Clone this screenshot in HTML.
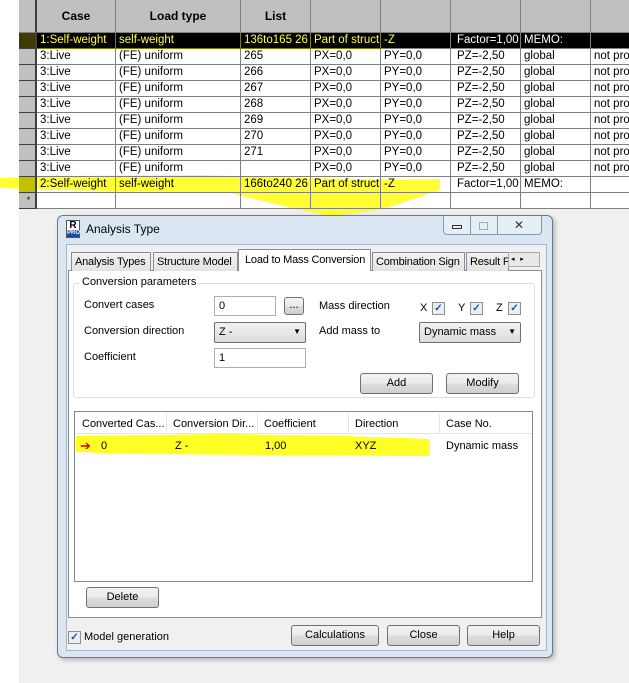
<!DOCTYPE html>
<html><head><style>
*{margin:0;padding:0;box-sizing:border-box}
body{width:629px;height:683px;overflow:hidden;background:#fff;font-family:"Liberation Sans",sans-serif;font-size:11px;position:relative}
.a{position:absolute}
.gbg{left:19px;top:209px;width:610px;height:474px;background:#f0f0f0}
.c{position:absolute;border-right:1px solid #808080;border-bottom:1px solid #808080;height:16px;line-height:15px;padding-left:3px;white-space:nowrap;overflow:hidden;color:#000;font-size:11.5px}
.h{background:#c0c0c0;font-weight:bold;text-align:center;padding:0;height:33px;line-height:32px;font-size:12px}
.rh{background:#c0c0c0;border-right:2px solid #404040;border-bottom:1px solid #404040}
.btn{position:absolute;border:1px solid #707070;border-radius:3px;background:linear-gradient(#f2f2f2,#ebebeb 50%,#dddddd 51%,#cfcfcf);text-align:center;font-size:11px;color:#000}
.tab{position:absolute;top:252px;height:19px;border:1px solid #898c95;border-bottom:none;background:linear-gradient(#f2f2f2,#e3e3e3);font-size:11px;line-height:18px;padding:0 3px;white-space:nowrap;overflow:hidden;letter-spacing:-0.2px}
.inp{position:absolute;background:#fff;border:1px solid #abadb3;font-size:11px;padding-left:4px;line-height:18px}
.lbl{position:absolute;font-size:11px;white-space:nowrap}
.cb{position:absolute;width:13px;height:13px;border:1px solid #8f8f8f;background:#e9eef5;color:#2a4f8f;font-size:10px;line-height:11px;text-align:center;font-weight:bold}
</style></head><body>
<div class="a gbg"></div>
<svg class="a" style="left:0;top:160px" width="629" height="60">
<path d="M0 18 L40 16 L200 15 L300 18 L400 20 L440 19 L440 30 L380 50 L330 56 L300 50 L230 33 L60 30 L0 28 Z" fill="#ffff00" opacity="0.8"/>
</svg>
<div id="g"></div>
<script>
var xs=[19,37,116,241,311,381,451,521,591,640];
var g=document.getElementById('g'),h='';
var hd=['','Case','Load type','List','','','','',''];
for(var i=0;i<9;i++){h+='<div class="c h" style="left:'+xs[i]+'px;top:0;width:'+(xs[i+1]-xs[i])+'px;'+(i==0?'border-right:2px solid #404040;':'')+'">'+hd[i]+'</div>';}
var rows=[];
rows.push(['1:Self-weight','self-weight','136to165 26','Part of struct','-Z','Factor=1,00','MEMO:','']);
for(var n=265;n<=272;n++)rows.push(['3:Live','(FE) uniform',n<272?''+n:'','PX=0,0','PY=0,0','PZ=-2,50','global','not proj']);
rows.push(['2:Self-weight','self-weight','166to240 26','Part of struct','-Z','Factor=1,00','MEMO:','']);
rows.push(['','','','','','','','']);
for(var r=0;r<rows.length;r++){var y=33+r*16;
 var blk=r==0;
 h+='<div class="c rh" style="left:19px;top:'+y+'px;width:18px;'+(blk?'background:#403c00;':'')+(r==9?'background:#c4c000;':'')+'text-align:center;font-size:9px">'+(r==10?'*':'')+'</div>';
 for(var i=1;i<9;i++){var st='left:'+xs[i]+'px;top:'+y+'px;width:'+(xs[i+1]-xs[i])+'px;';
  if(blk)st+='background:#000;color:#ffff40;'+(i<5?'border-color:#808000;':'');
  if(blk&&i>=6)st+='color:#fff;';
  if(i==6)st+='padding-left:6px;';
  h+='<div class="c" style="'+st+'">'+rows[r][i-1]+'</div>';}
}
g.innerHTML=h;
</script>
<!-- dialog -->
<div class="a" style="left:57px;top:215px;width:496px;height:443px;background:#dae7f3;border:1px solid #6a7a8c;border-radius:6px;box-shadow:2px 2px 5px rgba(0,0,0,.25)"></div>
<div class="a" style="left:66px;top:220px;width:14px;height:18px;background:#fff;border:1px solid #555;font-size:10px;font-weight:bold;text-align:center;line-height:9px">R<div style="background:#1d4aa0;color:#fff;font-size:6px;line-height:7px">PRO</div></div>
<div class="lbl" style="left:86px;top:222px;font-size:12px">Analysis Type</div>
<div class="a" style="left:443px;top:216px;width:99px;height:19px;border:1px solid #8a99aa;border-top:none;border-radius:0 0 4px 4px;background:#e6eef6"></div>
<div class="a" style="left:470px;top:216px;width:1px;height:18px;background:#8a99aa"></div>
<div class="a" style="left:497px;top:216px;width:1px;height:18px;background:#8a99aa"></div>
<div class="a" style="left:452px;top:225px;width:10px;height:4px;border:1px solid #333"></div>
<div class="a" style="left:479px;top:222px;width:9px;height:8px;border:1px solid #aaa"></div>
<div class="lbl" style="left:514px;top:218px;font-size:12px;color:#333">✕</div>
<div class="a" style="left:66px;top:244px;width:481px;height:407px;background:#f0f0f0;border:1px solid #a9b6c4"></div>
<div class="a" style="left:68px;top:270px;width:474px;height:348px;background:#fff;border:1px solid #898c95"></div>
<div class="tab" style="left:71px;width:80px">Analysis Types</div>
<div class="tab" style="left:153px;width:85px">Structure Model</div>
<div class="tab" style="left:238px;top:249px;height:22px;width:133px;background:#fff;line-height:20px;padding-left:6px">Load to Mass Conversion</div>
<div class="tab" style="left:372px;width:93px">Combination Sign</div>
<div class="tab" style="left:466px;width:43px">Result F</div>
<div class="a" style="left:508px;top:252px;width:32px;height:15px;background:#e8e8e8;border:1px solid #aaa;font-size:7px;line-height:13px">&nbsp;◂&nbsp;&nbsp;&nbsp;▸</div>
<div class="a" style="left:73px;top:283px;width:462px;height:115px;border:1px solid #d5dfe5;border-radius:3px"></div>
<div class="lbl" style="left:80px;top:276px;background:#fff;padding:0 2px">Conversion parameters</div>
<div class="lbl" style="left:84px;top:299px">Convert cases</div>
<div class="lbl" style="left:84px;top:325px">Conversion direction</div>
<div class="lbl" style="left:84px;top:351px">Coefficient</div>
<div class="inp" style="left:214px;top:296px;width:62px;height:20px">0</div>
<div class="btn" style="left:284px;top:297px;width:20px;height:18px;line-height:14px">...</div>
<div class="inp" style="left:214px;top:322px;width:92px;height:21px;background:linear-gradient(#f2f2f2,#dcdcdc);border-color:#707070;border-radius:2px">Z -<span style="position:absolute;right:4px;font-size:8px">▼</span></div>
<div class="inp" style="left:214px;top:348px;width:92px;height:20px">1</div>
<div class="lbl" style="left:319px;top:300px">Mass direction</div>
<div class="lbl" style="left:319px;top:325px">Add mass to</div>
<div class="lbl" style="left:420px;top:302px">X</div><div class="cb" style="left:432px;top:302px">✓</div>
<div class="lbl" style="left:458px;top:302px">Y</div><div class="cb" style="left:470px;top:302px">✓</div>
<div class="lbl" style="left:496px;top:302px">Z</div><div class="cb" style="left:508px;top:302px">✓</div>
<div class="inp" style="left:419px;top:322px;width:102px;height:21px;background:linear-gradient(#f2f2f2,#dcdcdc);border-color:#707070;border-radius:2px">Dynamic mass<span style="position:absolute;right:4px;font-size:8px">▼</span></div>
<div class="btn" style="left:360px;top:373px;width:73px;height:21px;line-height:19px">Add</div>
<div class="btn" style="left:446px;top:373px;width:73px;height:21px;line-height:19px">Modify</div>
<div class="a" style="left:74px;top:411px;width:459px;height:171px;border:1px solid #828790;background:#fff"></div>
<div class="a" style="left:75px;top:412px;width:457px;height:22px;border-bottom:1px solid #e5e5e5"></div>
<div class="lbl" style="left:82px;top:418px">Converted Cas...</div>
<div class="lbl" style="left:173px;top:418px">Conversion Dir...</div>
<div class="lbl" style="left:264px;top:418px">Coefficient</div>
<div class="lbl" style="left:355px;top:418px">Direction</div>
<div class="lbl" style="left:446px;top:418px">Case No.</div>
<div class="a" style="left:166px;top:414px;width:1px;height:19px;background:#e5e5e5"></div>
<div class="a" style="left:257px;top:414px;width:1px;height:19px;background:#e5e5e5"></div>
<div class="a" style="left:348px;top:414px;width:1px;height:19px;background:#e5e5e5"></div>
<div class="a" style="left:439px;top:414px;width:1px;height:19px;background:#e5e5e5"></div>
<svg class="a" style="left:74px;top:428px" width="360" height="30"><path d="M2 8 L150 6 L270 8 L355 11 L355 28 L200 27 L60 26 L2 24 Z" fill="#ffff00" opacity="0.85"/></svg>
<div class="lbl" style="left:80px;top:438px;color:#e00000;font-size:13px">➔</div>
<div class="lbl" style="left:101px;top:440px">0</div>
<div class="lbl" style="left:175px;top:440px">Z -</div>
<div class="lbl" style="left:265px;top:440px">1,00</div>
<div class="lbl" style="left:355px;top:440px">XYZ</div>
<div class="lbl" style="left:446px;top:440px">Dynamic mass</div>
<div class="btn" style="left:86px;top:587px;width:73px;height:21px;line-height:19px">Delete</div>
<div class="cb" style="left:68px;top:631px">✓</div>
<div class="lbl" style="left:84px;top:631px">Model generation</div>
<div class="btn" style="left:291px;top:625px;width:88px;height:21px;line-height:19px">Calculations</div>
<div class="btn" style="left:387px;top:625px;width:73px;height:21px;line-height:19px">Close</div>
<div class="btn" style="left:467px;top:625px;width:73px;height:21px;line-height:19px">Help</div>
</body></html>
